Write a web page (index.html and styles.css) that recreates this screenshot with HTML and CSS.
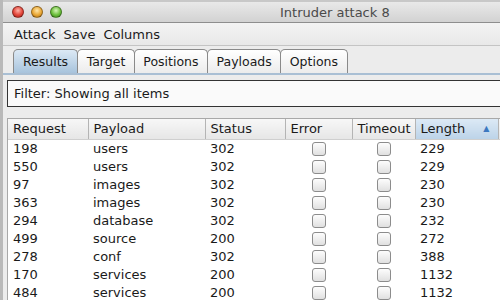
FILE: index.html
```html
<!DOCTYPE html>
<html lang="en">
<head>
    <meta charset="UTF-8">
    <title>Intruder attack 8</title>
    <link rel="stylesheet" href="styles.css">
</head>
<body>
    <div class="window">
        <div class="titlebar">
            <div class="lights">
                <span class="light light-close"></span>
                <span class="light light-min"></span>
                <span class="light light-max"></span>
            </div>
            <div class="title">Intruder attack 8</div>
        </div>

        <div class="menubar">
            <span class="menu-item">Attack</span>
            <span class="menu-item">Save</span>
            <span class="menu-item">Columns</span>
        </div>

        <div class="tabs">
            <div class="tab tab-active">Results</div>
            <div class="tab">Target</div>
            <div class="tab">Positions</div>
            <div class="tab">Payloads</div>
            <div class="tab">Options</div>
        </div>

        <div class="panel">
            <div class="filter">Filter: Showing all items</div>

            <div class="table-wrap">
                <table class="results">
                    <colgroup>
                        <col class="col-request">
                        <col class="col-payload">
                        <col class="col-status">
                        <col class="col-error">
                        <col class="col-timeout">
                        <col class="col-length">
                        <col class="col-extra">
                    </colgroup>
                    <thead>
                        <tr>
                            <th>Request</th>
                            <th>Payload</th>
                            <th>Status</th>
                            <th>Error</th>
                            <th>Timeout</th>
                            <th class="sorted">Length <span class="sort-arrow">&#9650;</span></th>
                            <th></th>
                        </tr>
                    </thead>
                    <tbody id="rows"></tbody>
                </table>
            </div>
        </div>
    </div>

    <script>
        // Attack results, in the order shown
        const results = [
            [198, 'users', 302, 229],
            [550, 'users', 302, 229],
            [97, 'images', 302, 230],
            [363, 'images', 302, 230],
            [294, 'database', 302, 232],
            [499, 'source', 200, 272],
            [278, 'conf', 302, 388],
            [170, 'services', 200, 1132],
            [484, 'services', 200, 1132]
        ];

        const tbody = document.getElementById('rows');
        results.forEach(([req, payload, status, length]) => {
            const tr = document.createElement('tr');
            tr.innerHTML = `
                <td>${req}</td>
                <td>${payload}</td>
                <td>${status}</td>
                <td class="check"><span class="checkbox"></span></td>
                <td class="check"><span class="checkbox"></span></td>
                <td>${length}</td>
                <td></td>`;
            tbody.appendChild(tr);
        });
    </script>
</body>
</html>
```

FILE: styles.css
```css
:root {
    --text-color: #1a1a1a;
    --border-color: #9a9a9a;
    --panel-color: #ececec;
    --tab-blue-top: #dce9f5;
    --tab-blue-bottom: #a7c3dc;
}

* {
    margin: 0;
    padding: 0;
    box-sizing: border-box;
    font-family: 'DejaVu Sans', 'Noto Sans', sans-serif;
}

body {
    width: 500px;
    height: 300px;
    overflow: hidden;
    background: #b9b9b9;
    color: var(--text-color);
    font-size: 12.5px;
}

.window {
    margin-left: 3px;
    width: 497px;
    height: 300px;
    overflow: hidden;
    background: var(--panel-color);
    border-top: 2px solid #c8c8c8;
}

.titlebar {
    height: 21px;
    display: flex;
    align-items: center;
    background: linear-gradient(#e9e9e9, #d2d2d2);
    border-bottom: 1px solid #8e8e8e;
}

.lights {
    display: flex;
    gap: 7px;
    padding-left: 9px;
}

.light {
    width: 12px;
    height: 12px;
    border-radius: 50%;
    border: 1px solid rgba(0, 0, 0, 0.35);
}

.light-close {
    background: radial-gradient(circle at 50% 35%, #ffb3a8, #e2463a 55%, #a8231a);
}

.light-min {
    background: radial-gradient(circle at 50% 35%, #ffe6a8, #e9a735 55%, #a96b10);
}

.light-max {
    background: radial-gradient(circle at 50% 35%, #d6f5b8, #6cbf3c 55%, #3a8419);
}

.title {
    margin-left: 218px;
    color: #4a4a4a;
    font-size: 13px;
    white-space: nowrap;
}

.menubar {
    height: 23px;
    display: flex;
    align-items: center;
    gap: 8px;
    padding-left: 11px;
    background: linear-gradient(#f3f3f3, #e8e8e8);
    border-bottom: 1px solid #c4c4c4;
    font-size: 13px;
}

.tabs {
    display: flex;
    padding-left: 10px;
    padding-top: 3px;
    background: var(--panel-color);
}

.tab {
    height: 24px;
    padding: 0 8.5px;
    display: flex;
    align-items: center;
    font-size: 12.5px;
    background: linear-gradient(#ffffff, #ececec);
    border: 1px solid #8a8a8a;
    border-bottom: none;
    border-radius: 5px 5px 0 0;
    margin-right: -1px;
}

.tab-active {
    padding: 0 9px;
    background: linear-gradient(var(--tab-blue-top), var(--tab-blue-bottom));
}

.panel {
    border-top: 2px solid #a9bfd4;
    padding: 5px 0 0 4px;
}

.filter {
    height: 27px;
    display: flex;
    align-items: center;
    padding-left: 6px;
    background: #fafafa;
    border: 1px solid #333333;
    border-right: none;
    font-size: 13px;
}

.table-wrap {
    margin-top: 11px;
    background: #ffffff;
    border: 1px solid #a8a8a8;
    border-right: none;
    height: 200px;
}

.results {
    border-collapse: collapse;
    table-layout: fixed;
    width: 560px;
    font-size: 13px;
}

.col-request { width: 80px; }
.col-payload { width: 117px; }
.col-status { width: 80px; }
.col-error { width: 67px; }
.col-timeout { width: 63px; }
.col-length { width: 83px; }
.col-extra { width: 70px; }

.results th {
    height: 20px;
    text-align: left;
    font-weight: normal;
    padding-left: 5px;
    background: linear-gradient(#f7f7f7, #e6e6e6);
    border-right: 1px solid #b4b4b4;
    border-bottom: 1px solid #cfcfcf;
    white-space: nowrap;
}

.results th.sorted {
    background: linear-gradient(var(--tab-blue-top), #bcd3e8);
    position: relative;
}

.sort-arrow {
    position: absolute;
    right: 8px;
    top: 5px;
    font-size: 8px;
    color: #3c78c0;
}

.results td {
    height: 18px;
    padding-left: 5px;
    white-space: nowrap;
}

.results td.check {
    padding-left: 0;
    text-align: center;
}

.checkbox {
    display: inline-block;
    width: 14px;
    height: 14px;
    vertical-align: middle;
    border: 1px solid #8c8c8c;
    border-radius: 3px;
    background: linear-gradient(#fdfdfd, #e0e0e0);
}
```
